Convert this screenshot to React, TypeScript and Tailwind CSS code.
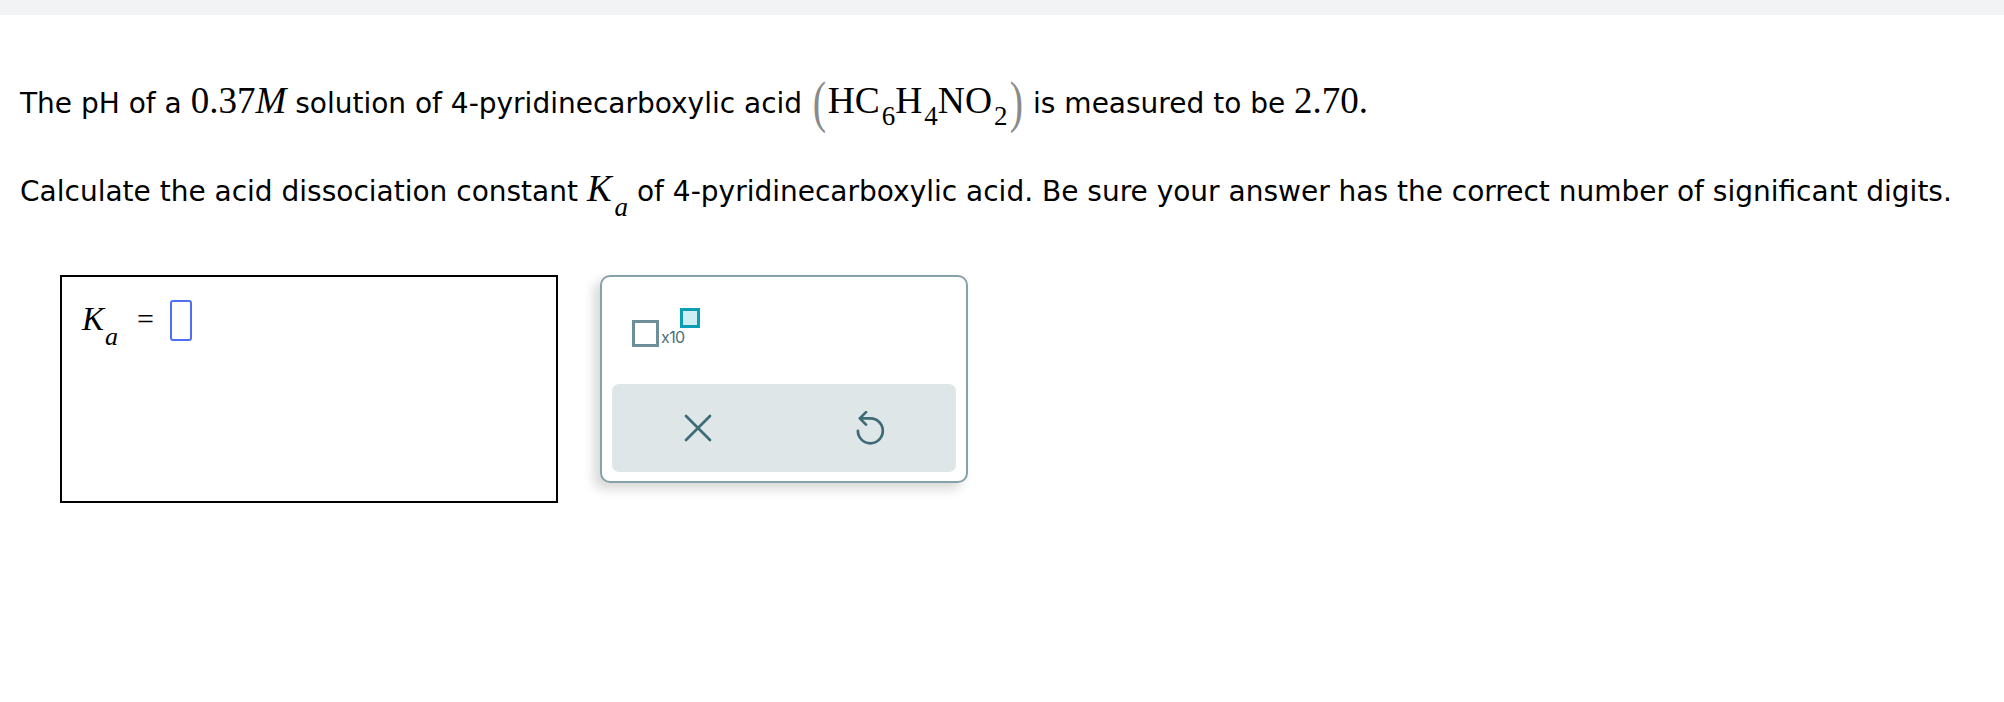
import React from "react";

const serif = "font-['Liberation_Serif',serif]";

function X10Icon() {
  return (
    <div className="relative w-[68px] h-[39px]">
      <div className="absolute left-0 bottom-0 flex items-end">
        <div className="w-[27px] h-[27px] border-[3px] border-[#6f8f98] bg-white" />
        <span className="ml-[2px] mb-[2px] text-[16px] leading-none tracking-[-0.6px] text-[#46707c] font-['Inter',sans-serif]">
          x10
        </span>
      </div>
      <div className="absolute right-0 top-0 w-[20px] h-[20px] border-[3px] border-[#0b9db4] bg-[#cdeef3]" />
    </div>
  );
}

function CloseIcon() {
  return (
    <svg width="30" height="30" viewBox="0 0 30 30" fill="none">
      <path
        d="M3 3L27 27M27 3L3 27"
        stroke="#3d6b78"
        strokeWidth="2.7"
        strokeLinecap="round"
      />
    </svg>
  );
}

function UndoIcon() {
  return (
    <svg width="34" height="34" viewBox="0 0 30 30" fill="none">
      <path
        d="M11.5 1L6 6.5L11.5 12M6 6.5H15.3A11 11 0 1 1 4.3 17.5"
        stroke="#3d6b78"
        strokeWidth="2.4"
        strokeLinecap="round"
        strokeLinejoin="round"
      />
    </svg>
  );
}

function Sub({ children }: { children: React.ReactNode }) {
  return <span className="ml-[2px] text-[27px] leading-none align-[-12px]">{children}</span>;
}

function Paren({ children }: { children: React.ReactNode }) {
  return (
    <span className="inline-block scale-x-[0.8] scale-y-[1.12] text-[50px] leading-[0px] align-[-6px] text-[#8a8a8a] font-light">
      {children}
    </span>
  );
}

export default function App() {
  return (
    <div className="min-h-[702px] bg-white text-black font-['DejaVu_Sans',sans-serif]">
      <div className="h-[15px] bg-[#f2f3f5]" />

      <div className="pl-[20px] pt-[67px] text-[28px]">
        <div className="h-[40px] leading-[40px] whitespace-nowrap">
          The pH of a{" "}
          <span className={`${serif} text-[37px] leading-none`}>
            0.37<i>M</i>
          </span>{" "}
          solution of 4-pyridinecarboxylic acid{" "}
          <span className={`${serif} text-[37.5px] leading-none`}>
            <Paren>(</Paren>
            HC<Sub>6</Sub>H<Sub>4</Sub>NO<Sub>2</Sub>
            <Paren>)</Paren>
          </span>{" "}
          is measured to be{" "}
          <span className={`${serif} text-[37px] leading-none`}>2.70.</span>
        </div>

        <div className="mt-[48px] h-[40px] leading-[40px] whitespace-nowrap">
          Calculate the acid dissociation constant{" "}
          <span className={`${serif} text-[37px] leading-none italic`}>
            K<span className="ml-[3px] text-[27px] leading-none align-[-15px]">a</span>
          </span>{" "}
          of 4-pyridinecarboxylic acid. Be sure your answer has the correct number of significant
          digits.
        </div>
      </div>

      <div className="flex items-start gap-[42px] pl-[60px] pt-[65px]">
        <div className="w-[498px] h-[228px] border-2 border-black pl-[20px] pt-[23px]">
          <div className="flex items-start">
            <span className={`${serif} mt-[3px] text-[33px] leading-[32px] italic`}>
              K<span className="ml-[1px] text-[26px] leading-none align-[-15px]">a</span>
            </span>
            <span className={`${serif} ml-[19px] mt-[4px] text-[30px] leading-[30px]`}>=</span>
            <div className="ml-[16px] w-[22px] h-[41px] border-2 border-[#4d6ef5] rounded-[3px]" />
          </div>
        </div>

        <div className="w-[368px] h-[208px] border-2 border-[#86a1a9] rounded-[10px] bg-white shadow-[-6px_6px_12px_rgba(0,0,0,0.16)] flex flex-col">
          <div className="pl-[30px] pt-[31px] h-[107px]">
            <X10Icon />
          </div>
          <div className="mx-[10px] h-[88px] rounded-[7px] bg-[#dfe6e8] flex">
            <div className="flex-1 flex items-center justify-center">
              <CloseIcon />
            </div>
            <div className="flex-1 flex items-center justify-center">
              <UndoIcon />
            </div>
          </div>
        </div>
      </div>
    </div>
  );
}
